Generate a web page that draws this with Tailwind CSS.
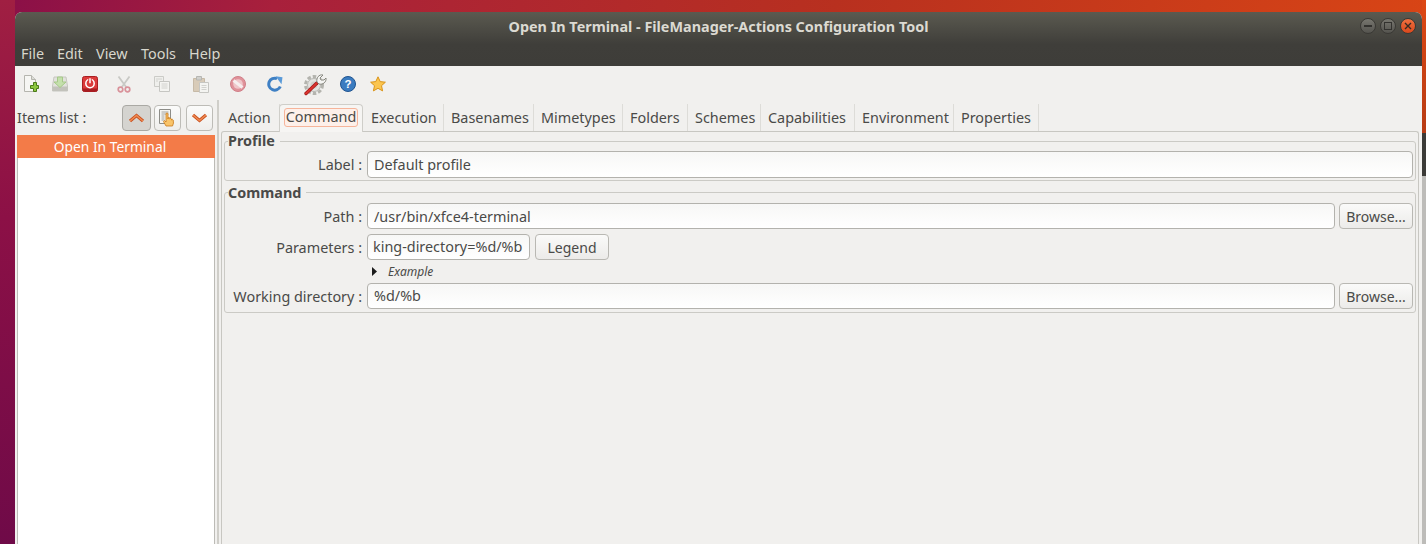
<!DOCTYPE html>
<html>
<head>
  <meta charset="utf-8">
  <title>Open In Terminal - FileManager-Actions Configuration Tool</title>
  <script src="https://cdn.jsdelivr.net/npm/@tailwindcss/browser@4"></script>
</head>
<body class="h-[544px] w-[1426px] overflow-hidden flex font-['Noto_Sans',sans-serif] text-[14.4px] text-[#4a4a48] bg-[linear-gradient(100deg,#8a0f48_0%,#a8203c_18%,#b8301f_55%,#dd4814_100%)]">
  <div class="w-[15px] shrink-0 bg-[linear-gradient(180deg,#a01f42_0%,#8c1046_40%,#6f0a48_100%)]"></div>

  <!-- window -->
  <div class="mt-[12px] w-[1407px] h-[532px] shrink-0 flex flex-col rounded-t-[7px] overflow-hidden bg-[#f1f0ee]">
    <!-- title + menu -->
    <div class="h-[54px] shrink-0 flex flex-col bg-[linear-gradient(180deg,#5b5a50_0%,#3f3e3a_60%,#3e3d39_100%)]">
      <div class="h-[30px] relative flex items-center justify-center">
        <span class="text-[14.4px] font-bold text-[#dcdad2]">Open In Terminal - FileManager-Actions Configuration Tool</span>
        <div class="absolute right-[6px] top-[6px] flex gap-[4px]">
          <div class="w-[16px] h-[16px] rounded-full bg-[linear-gradient(180deg,#77766f,#55544f)] border border-[#3a3935] flex items-center justify-center"><div class="w-[8px] h-[2px] bg-[#33322f]"></div></div>
          <div class="w-[16px] h-[16px] rounded-full bg-[linear-gradient(180deg,#77766f,#55544f)] border border-[#3a3935] flex items-center justify-center"><div class="w-[8px] h-[8px] border border-[#33322f]"></div></div>
          <div class="w-[16px] h-[16px] rounded-full bg-[linear-gradient(180deg,#f0703f,#d9481c)] border border-[#3a3935] flex items-center justify-center">
            <svg width="8" height="8" viewBox="0 0 8 8"><path d="M1 1l6 6M7 1l-6 6" stroke="#3a2a20" stroke-width="1.4"/></svg>
          </div>
        </div>
      </div>
      <div class="flex text-[#d8d7cd] pl-[6px] h-[24px] items-center">
        <span class="w-[36px]">File</span>
        <span class="w-[39px]">Edit</span>
        <span class="w-[45px]">View</span>
        <span class="w-[48px]">Tools</span>
        <span>Help</span>
      </div>
    </div>

    <!-- toolbar -->
    <div class="h-[34px] shrink-0 flex items-center pl-[8px] pt-[2px]">
      <!-- new -->
      <svg width="16" height="18" viewBox="0 0 16 18"><path d="M1.500.5h7l4 4v12h-11z" fill="#f6f6f3" stroke="#b5b5ae"/><path d="M8.500.5v4h4" fill="#dcdcd6" stroke="#b5b5ae"/><path d="M8 10h3V7h3v3h2v3h-2v3h-3v-3H8z" transform="translate(-.5 .5)" fill="#8cc63f" stroke="#4a7a18" stroke-width="1"/></svg>
      <!-- save -->
      <svg class="ml-[13px]" width="16" height="16" viewBox="0 0 16 16"><path d="M2 1h12l1.500 9v5H.5v-5z" fill="#e2e2dd" stroke="#c6c6c0"/><path d="M.5 10.500h15v4.500H.5z" fill="#c2c2bb"/><path d="M5.500 1h5v5H14l-6 5.500L2 6h3.500z" fill="#c4e0ac" stroke="#a6c888"/></svg>
      <!-- quit -->
      <svg class="ml-[14px]" width="16" height="16" viewBox="0 0 16 16"><rect x=".5" y=".5" width="15" height="15" rx="2" fill="#db3a3a" stroke="#a81f22"/><path d="M.5 12.500h15V14a1.500 1.500 0 0 1-1.500 1.500H2A1.500 1.500 0 0 1 .5 14z" fill="#a81d21"/><circle cx="8" cy="7.500" r="4.200" fill="none" stroke="#fff" stroke-width="1.500"/><path d="M8 1.800v5" stroke="#db3a3a" stroke-width="3.500"/><path d="M8 2.300v5" stroke="#fff" stroke-width="1.500"/></svg>
      <!-- cut -->
      <svg class="ml-[19px]" width="14" height="17" viewBox="0 0 14 17"><path d="M1.500.5L9.500 11.500M12.500.5L4.500 11.500" stroke="#c9c9c5" stroke-width="1.800"/><circle cx="3.500" cy="13.500" r="2.300" fill="none" stroke="#d9929a" stroke-width="1.700"/><circle cx="10.500" cy="13.500" r="2.300" fill="none" stroke="#d9929a" stroke-width="1.700"/></svg>
      <!-- copy -->
      <svg class="ml-[23px]" width="16" height="16" viewBox="0 0 16 16"><path d="M.5.500h9v10h-9z" fill="#efefec" stroke="#cbcbc7"/><path d="M5.500 5.500h10v10h-10z" fill="#f4f4f1" stroke="#c6c6c2"/><path d="M7.500 8h6M7.500 10h6M7.500 12h6M2 3h6M2 5h2" stroke="#d2d2ce"/></svg>
      <!-- paste -->
      <svg class="ml-[23px]" width="16" height="17" viewBox="0 0 16 17"><path d="M.5 2.500h11v13H.5z" fill="#d8cbb8" stroke="#c7baa7"/><path d="M3.500.5h5v3.500h-5z" fill="#d0d0cc" stroke="#b6b6b2"/><path d="M6.500 6.500h9v10h-9z" fill="#f4f4f1" stroke="#c6c6c2"/><path d="M8.500 9.500h5M8.500 11.500h5M8.500 13.500h5" stroke="#d2d2ce"/></svg>
      <!-- stop -->
      <svg class="ml-[21px]" width="16" height="16" viewBox="0 0 16 16"><circle cx="8" cy="8" r="7.500" fill="#e0929a" stroke="#d07f88"/><circle cx="8" cy="8" r="4.800" fill="#efc6c9"/><path d="M3.500 4.500l9 7" stroke="#f6eeee" stroke-width="3"/></svg>
      <!-- reload -->
      <svg class="ml-[21px]" width="16" height="16" viewBox="0 0 16 16"><path d="M13.300 10.500A6 6 0 1 1 10 2.600" fill="none" stroke="#3f80c4" stroke-width="3"/><path d="M8.500 0l7 1-1 7z" transform="translate(0 .2)" fill="#5a9ad8"/></svg>
      <!-- preferences -->
      <svg class="ml-[20px]" width="24" height="24" viewBox="0 0 24 24"><circle cx="11" cy="13" r="8.500" fill="#ececea" stroke="#b4b4ae" stroke-width="3" stroke-dasharray="3.500 2"/><circle cx="11" cy="13" r="6.500" fill="#e4e4e1" stroke="#aaaaa4" stroke-width=".8"/><circle cx="11" cy="13" r="3.500" fill="#d0d0cb"/><path d="M3 21.500L14 11" stroke="#a01818" stroke-width="3.400" stroke-linecap="round"/><path d="M3 21.500L14 11" stroke="#d9342f" stroke-width="2" stroke-linecap="round"/><path d="M14 10c-1-4 2-8 6-7l-3 3 1 2 3 0 2-2c.6 4-3 7-7 6z" fill="#f5f5f3" stroke="#85857d"/></svg>
      <!-- help -->
      <svg class="ml-[13px]" width="16" height="16" viewBox="0 0 16 16"><circle cx="8" cy="8" r="7.500" fill="#3b7cc0" stroke="#20548f"/><text x="8" y="12" text-anchor="middle" font-family="Liberation Sans" font-weight="bold" font-size="11.500" fill="#fff">?</text></svg>
      <!-- star -->
      <svg class="ml-[14px]" width="16" height="16" viewBox="0 0 16 16"><path d="M8 .8l2.200 4.800 5.200.6-3.900 3.500 1.100 5.200L8 12.300l-4.600 2.600 1.100-5.200L.6 6.200l5.200-.6z" fill="#fbc54e" stroke="#d9941a"/></svg>
    </div>

    <!-- panes -->
    <div class="flex-1 flex min-h-0">
      <div class="w-[202px] shrink-0 flex flex-col pl-[2px] pr-[2px]">
        <div class="h-[35px] shrink-0 flex items-center">
          <span class="w-[105px]">Items list :</span>
          <button class="w-[29px] h-[26px] rounded-[4px] border border-[#aaa9a4] bg-[#d5d4d0] flex items-center justify-center">
            <svg width="17" height="10" viewBox="0 0 17 10"><path d="M2 8l6.500-5.500L15 8" fill="none" stroke="#c9501f" stroke-width="3.200"/><path d="M2 8l6.500-5.500L15 8" fill="none" stroke="#ef8a52" stroke-width="1.500"/></svg>
          </button>
          <button class="ml-[3px] w-[27px] h-[26px] rounded-[4px] border border-[#bdbcb7] bg-[linear-gradient(180deg,#fbfbfa,#efeeec)] flex items-center justify-center">
            <svg width="18" height="18" viewBox="0 0 18 18"><path d="M.5.500h11v14H.5z" fill="#f5f5f3" stroke="#8d8d88"/><path d="M2.500 3h7M2.500 5h7M2.500 7h3M2.500 9h3M2.500 11h3" stroke="#a4a49f"/><path d="M7 17l-2.500-4.500 1-1 1.500 1.500V5a1 1 0 0 1 2 0v5V9a1 1 0 0 1 1.800 0v1a1 1 0 0 1 1.700 0v1a1 1 0 0 1 1.700 0l.3 3-1 3z" fill="#f9c46a" stroke="#c97a1a" stroke-width=".8"/></svg>
          </button>
          <button class="ml-[5px] w-[27px] h-[26px] rounded-[4px] border border-[#bdbcb7] bg-[linear-gradient(180deg,#fbfbfa,#efeeec)] flex items-center justify-center">
            <svg width="17" height="10" viewBox="0 0 17 10"><path d="M2 2l6.500 5.500L15 2" fill="none" stroke="#c9501f" stroke-width="3.200"/><path d="M2 2l6.500 5.500L15 2" fill="none" stroke="#ef8a52" stroke-width="1.500"/></svg>
          </button>
        </div>
        <div class="flex-1 bg-white border-x border-[#bcbbb6]">
          <div class="h-[23px] -ml-[1px] -mr-[1px] pr-[12px] bg-[#f37b48] text-white text-center text-[13.8px] leading-[23px]">Open In Terminal</div>
        </div>
      </div>
      <div class="w-[2px] shrink-0 bg-[#cfcec9]"></div>

      <!-- notebook -->
      <div class="flex-1 flex flex-col pl-[2px] pr-[3px] pt-[4px] min-w-0">
        <div class="h-[27px] shrink-0 flex">
          <div class="w-[59px] pl-[7px] leading-[27px] border-r border-[#dddcd8]">Action</div>
          <div class="w-[84px] h-[28px] -ml-[1px] relative z-10 border border-b-0 border-[#cfcec9] rounded-t-[4px] bg-[#f6f5f3] flex items-center justify-center">
            <span class="h-[19px] leading-[16px] px-[1px] mb-[2px] rounded-[3px] border border-[#f6b49a] bg-[#fdf0ea]">Command</span>
          </div>
          <div class="w-[81px] pl-[8px] leading-[27px] border-r border-[#dddcd8]">Execution</div>
          <div class="w-[90px] pl-[7px] leading-[27px] border-r border-[#dddcd8]">Basenames</div>
          <div class="w-[89px] pl-[7px] leading-[27px] border-r border-[#dddcd8]">Mimetypes</div>
          <div class="w-[65px] pl-[7px] leading-[27px] border-r border-[#dddcd8]">Folders</div>
          <div class="w-[73px] pl-[7px] leading-[27px] border-r border-[#dddcd8]">Schemes</div>
          <div class="w-[94px] pl-[7px] leading-[27px] border-r border-[#dddcd8]">Capabilities</div>
          <div class="w-[99px] pl-[7px] leading-[27px] border-r border-[#dddcd8]">Environment</div>
          <div class="w-[85px] pl-[7px] leading-[27px] border-r border-[#dddcd8]">Properties</div>
        </div>
        <div class="flex-1 border border-b-0 border-[#c8c7c2] rounded-t-[3px] px-[2px]">
          <fieldset class="border border-[#cbcac5] rounded-[3px] pr-[2px] pb-[2px]">
            <legend class="ml-[3px] pr-[5px] font-bold leading-[18px]">Profile</legend>
            <div class="grid grid-cols-[137px_1fr] gap-x-[5px] items-center mt-[1px]">
              <span class="text-right">Label :</span>
              <div class="h-[27px] leading-[25px] px-[6px] rounded-[4px] border border-[#b3b2ad] bg-[linear-gradient(180deg,#f7f7f6,#ffffff)]">Default profile</div>
            </div>
          </fieldset>
          <fieldset class="mt-[2px] border border-[#cbcac5] rounded-[3px] pr-[2px] pb-[3px]">
            <legend class="ml-[3px] pr-[5px] font-bold leading-[19px]">Command</legend>
            <div class="grid grid-cols-[137px_1fr] gap-x-[5px] items-center mt-[1px]">
              <span class="text-right pt-[2px]">Path :</span>
              <div class="flex gap-[4px]">
                <div class="flex-1 h-[26px] leading-[25px] px-[6px] rounded-[4px] border border-[#b3b2ad] bg-[linear-gradient(180deg,#f7f7f6,#ffffff)]">/usr/bin/xfce4-terminal</div>
                <button class="w-[74px] h-[26px] rounded-[4px] border border-[#b9b8b3] bg-[linear-gradient(180deg,#fafaf9,#ecebe9)] text-[14px]">Browse...</button>
              </div>
              <span class="text-right mt-[5px] pt-[2px]">Parameters :</span>
              <div class="flex gap-[5px] mt-[5px]">
                <div class="w-[163px] h-[26px] leading-[24px] pl-[5px] overflow-hidden whitespace-nowrap rounded-[4px] border border-[#b3b2ad] bg-[linear-gradient(180deg,#f7f7f6,#ffffff)]">king-directory=%d/%b</div>
                <button class="w-[74px] h-[26px] rounded-[4px] border border-[#b9b8b3] bg-[linear-gradient(180deg,#fafaf9,#ecebe9)] text-[14px]">Legend</button>
              </div>
              <span></span>
              <div class="h-[23px] flex items-center pl-[5px] text-[12px] italic">
                <svg width="5" height="9" viewBox="0 0 5 9"><path d="M0 0l5 4.500L0 9z" fill="#1c1c1c"/></svg>
                <span class="ml-[11px]">Example</span>
              </div>
              <span class="text-right pt-[2px]">Working directory :</span>
              <div class="flex gap-[4px]">
                <div class="flex-1 h-[26px] leading-[24px] px-[6px] rounded-[4px] border border-[#b3b2ad] bg-[linear-gradient(180deg,#f7f7f6,#ffffff)]">%d/%b</div>
                <button class="w-[74px] h-[26px] rounded-[4px] border border-[#b9b8b3] bg-[linear-gradient(180deg,#fafaf9,#ecebe9)] text-[14px]">Browse...</button>
              </div>
            </div>
          </fieldset>
        </div>
      </div>
    </div>
  </div>

  <!-- what shows behind the window on the right -->
  <div class="w-[4px] flex flex-col">
    <div class="h-[133px] bg-[linear-gradient(180deg,#dd4814,#b83c14)]"></div>
    <div class="h-[43px] bg-[#3c3b38]"></div>
    <div class="flex-1 bg-[#bdbcb9]"></div>
  </div>
</body>
</html>
